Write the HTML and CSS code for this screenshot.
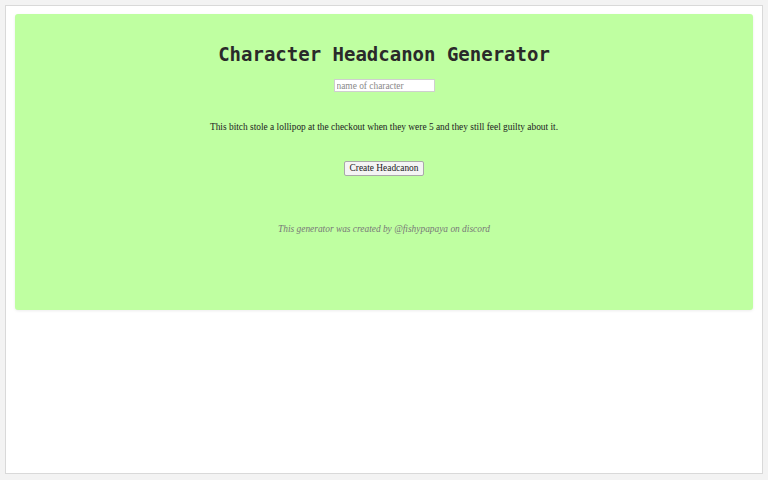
FILE: index.html
```html
<!DOCTYPE html>
<html lang="en">
<head>
  <meta charset="UTF-8">
  <meta name="viewport" content="width=device-width, initial-scale=1.0">
  <title>Character Headcanon Generator</title>
  <link rel="stylesheet" href="styles.css">
</head>
<body>
  <div class="frame">
    <!-- Generator Card -->
    <div class="card">
      <h1>Character Headcanon Generator</h1>
      <input type="text" id="char-name" class="name-input" placeholder="name of character">
      <p id="output" class="headcanon">This bitch stole a lollipop at the checkout when they were 5 and they still feel guilty about it.</p>
      <button type="button" class="make-btn" onclick="makeHeadcanon()">Create Headcanon</button>
      <p class="credit">This generator was created by @fishypapaya on discord</p>
    </div>
  </div>

  <script>
    const headcanons = [
      "stole a lollipop at the checkout when they were 5 and they still feel guilty about it.",
      "talks to their plants every morning.",
      "can't whistle no matter how hard they try.",
      "secretly loves cheesy romance movies."
    ];

    function makeHeadcanon() {
      const name = document.getElementById("char-name").value || "This bitch";
      const pick = headcanons[Math.floor(Math.random() * headcanons.length)];
      document.getElementById("output").textContent = name + " " + pick;
    }
  </script>
</body>
</html>
```

FILE: styles.css
```css
/* General Styling */
body {
  background-color: #f3f3f3;
  font-family: "Liberation Serif", "Times New Roman", serif;
  margin: 0;
  padding: 5px;
}

.frame {
  background-color: white;
  border: 1px solid #d9d9d9;
  height: 451px;
  padding: 8px 9px;
}

/* Generator Card */
.card {
  background-color: #bfffa1;
  border-radius: 3px;
  box-shadow: 0px 1px 3px rgba(0, 0, 0, 0.08);
  height: 296px;
  text-align: center;
  color: #222;
  overflow: hidden;
}

.card h1 {
  font-family: "DejaVu Sans Mono", monospace;
  font-size: 19px;
  font-weight: bold;
  color: #2a2a2a;
  margin: 29px 0 14px;
  line-height: 22px;
}

.name-input {
  display: block;
  margin: 0 auto;
  width: 101px;
  height: 13px;
  padding: 0 2px;
  box-sizing: border-box;
  border: 1px solid #cfcfcf;
  font-family: "Liberation Serif", serif;
  font-size: 9.4px;
}

.name-input::placeholder {
  color: #8a8a8a;
}

.headcanon {
  font-size: 9.4px;
  margin: 29px 0 24px;
  line-height: 12px;
}

.make-btn {
  font-family: "Liberation Serif", serif;
  font-size: 9.4px;
  color: #222;
  background-color: #f4f4f4;
  border: 1px solid #a9a9a9;
  border-radius: 2px;
  padding: 0 5px;
  height: 15px;
  line-height: 12px;
}

.credit {
  font-size: 9.4px;
  font-style: italic;
  color: #777;
  margin: 48px 0 0;
}
```
